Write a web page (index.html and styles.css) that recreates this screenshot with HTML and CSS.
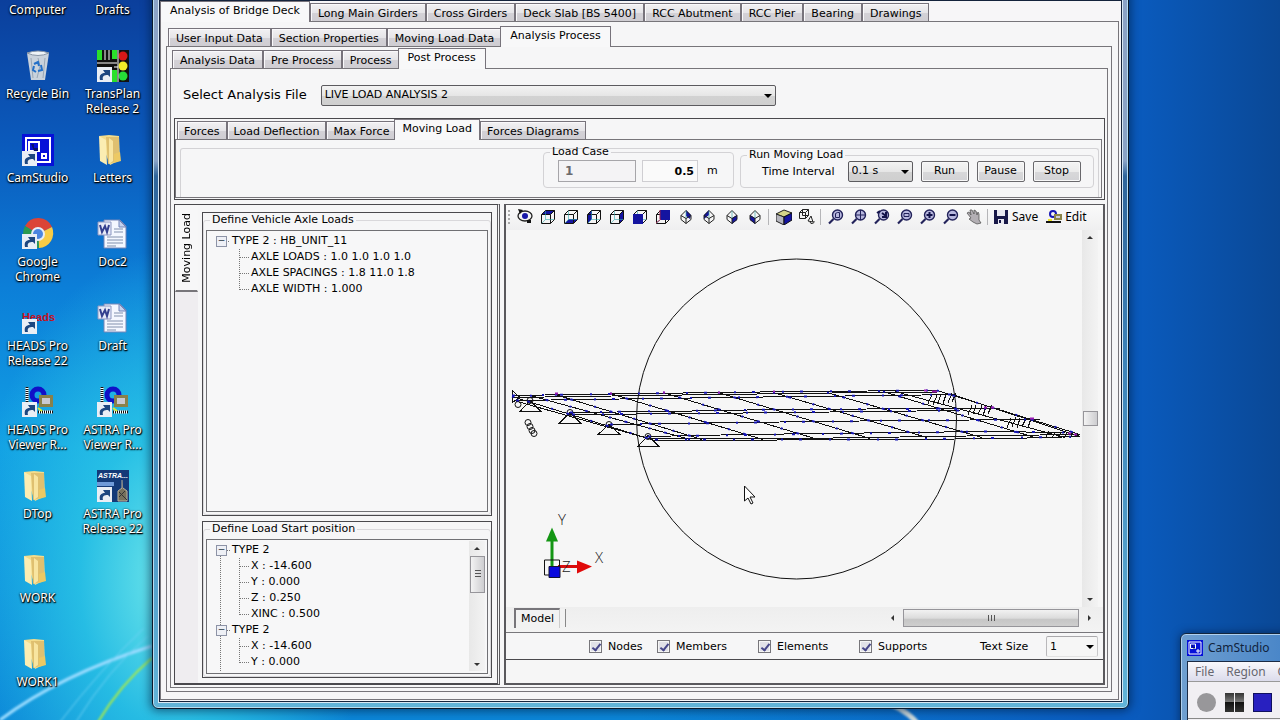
FILE: index.html
```html
<!DOCTYPE html>
<html lang="en">
<head>
<meta charset="utf-8">
<title>Analysis of Bridge Deck</title>
<link rel="stylesheet" href="styles.css">
</head>
<body>
<svg class="defs" aria-hidden="true">
  <symbol id="shortcut" viewBox="0 0 15 15"><path d="M0 0h15v15H0z" fill="#e9eef5"/><path d="M3 13C2 8 4 6 8 6L6 3l7 0 0 7-2-2C7 8 5 9 6 13z" fill="#1d4780"/></symbol>
  <symbol id="folder" viewBox="0 0 32 32"><path d="M2 2l10-1 10 1 1 24-10 5z" fill="#f3dc8b"/><path d="M9 3l13 0v24l-11 3z" fill="#dfc070"/><path d="M2 2l7 4 1 25-7-4z" fill="#fbedb2"/><path d="M12 4l4 3v20l-4 3z" fill="#f8e5a0"/><path d="M17 20l6-2 1 9-7 2z" fill="#ecc964"/></symbol>
  <symbol id="doc" viewBox="0 0 32 32"><path d="M7 2h16l6 6v22H7z" fill="#f4f7ff" stroke="#7586b8"/><path d="M22 2v7h7z" fill="#c6d3ee" stroke="#7586b8"/><path d="M17 11h9M17 14h9M10 19h16M10 22h16M10 25h16M10 28h9" stroke="#8190ad"/><path d="M1 4h13v13H1z" fill="#e6eaf7" stroke="#8c97c2"/><path d="M3 7l2 7 3-6 2 6 2-7" fill="none" stroke="#34408f" stroke-width="2"/></symbol>
  <symbol id="viewer" viewBox="0 0 32 32"><path d="M5 1v17M16 26h15" stroke="#fff" stroke-width="3"/><path d="M5 1v17M16 26h15" stroke="#111" stroke-width="3" stroke-dasharray="1 1"/><circle cx="16" cy="9" r="6" fill="none" stroke="#1010c8" stroke-width="5"/><path d="M17 9h14v12H17z" fill="#89804a"/><path d="M20 12h8v6h-8z" fill="#c9c9d2"/><path d="M16 22l4 3" stroke="#d6ee32" stroke-width="2"/></symbol>
  <symbol id="cam" viewBox="0 0 32 32"><path d="M0 0h32v32H0z" fill="#0610d8"/><path d="M4 4h24v24H4zM7 8h10v9H7zM20 20h4v4h-4z" fill="none" stroke="#fff" stroke-width="2"/><path d="M9 10h3v4h4v3h-4z" fill="#071070"/></symbol>
  <symbol id="frame" viewBox="0 0 16 16"><path d="M1.500 5.500h9v9h-9zM5.500 1.500h9v9l-4 4M1.500 5.500l4-4M10.500 5.500l4-4" fill="none" stroke="#111"/><path d="M5.500 2v8.500H14M2 14l3.500-3.500" stroke="#3aa" fill="none" stroke-width=".6"/></symbol>
  <symbol id="dia" viewBox="0 0 16 16"><path d="M8 1.500l5 5v4l-5 4-5-4v-4zM3 6.500l5 3 5-3M8 9.500v5" fill="none" stroke="#222"/><path d="M8 2v7" stroke="#4aa" stroke-width=".7"/></symbol>
  <symbol id="lens" viewBox="0 0 16 16"><circle cx="9.500" cy="6" r="5" fill="#b8b8df" stroke="#22225a" stroke-width="1.400"/><path d="M5.500 10L1 14.500" stroke="#22225a" stroke-width="2.200"/></symbol>
</svg>

<main class="desktop">
  <svg class="streaks" viewBox="0 0 1280 720" preserveAspectRatio="none" aria-hidden="true">
    <defs><filter id="soft"><feGaussianBlur stdDeviation="1"/></filter></defs>
    <g fill="none" filter="url(#soft)">
      <path d="M0 720Q60 675 152 646" stroke="#9adcff" stroke-width="3"/>
      <path d="M60 722Q100 670 144 628M76 722Q108 670 148 636" stroke="#6fd2f4"/>
      <path d="M98 722Q120 685 152 658" stroke="#a8ea4a" stroke-width="2"/>
      <path d="M880 700Q905 708 918 724" stroke="#cfdcdd" stroke-width="5"/>
    </g>
  </svg>

  <div class="icons">
    <div class="iconcol">
      <div class="item"><svg></svg><span>Computer</span></div>
      <div class="item"><svg viewBox="0 0 32 32"><path d="M5 3l22 0-4 27-14 0z" fill="#c9d2dc"/><path d="M5 3q11 5 22 0-11-4-22 0" fill="#eef3f7" stroke="#8794a5"/><path d="M9 8l2 20M23 8l-2 20M16 8l2 8-3 12" stroke="#9aa7b6" fill="none"/><path d="M12 14l4-2 1 4M19 15l1 5-4 1M14 22l-3-2 1-4" fill="none" stroke="#2470c8" stroke-width="2"/></svg><span>Recycle Bin</span></div>
      <div class="item"><svg viewBox="0 0 32 32"><use href="#cam" width="32" height="32"/><use href="#shortcut" y="17" width="15" height="15"/></svg><span>CamStudio</span></div>
      <div class="item"><svg viewBox="0 0 32 32"><path d="M16 16L3 8A15 15 0 0 1 30 9z" fill="#db4437"/><path d="M16 16L30 9A15 15 0 0 1 17 30z" fill="#f8cc46"/><path d="M16 16l1 14A15 15 0 0 1 3 8z" fill="#2c9a50"/><circle cx="16" cy="16" r="7" fill="#e7eef6"/><circle cx="16" cy="16" r="5" fill="#4c86e0"/><use href="#shortcut" y="16" width="15" height="15"/></svg><span>Google Chrome</span></div>
      <div class="item"><svg viewBox="0 0 32 32"><text x="0" y="19" class="heads">Heads</text><use href="#shortcut" y="17" width="15" height="15"/></svg><span>HEADS Pro Release 22</span></div>
      <div class="item"><svg viewBox="0 0 32 32"><use href="#viewer" width="32" height="32"/><use href="#shortcut" y="16" width="15" height="15"/></svg><span>HEADS Pro Viewer R...</span></div>
      <div class="item"><svg viewBox="0 0 32 32"><use href="#folder" width="32" height="32"/></svg><span>DTop</span></div>
      <div class="item"><svg viewBox="0 0 32 32"><use href="#folder" width="32" height="32"/></svg><span>WORK</span></div>
      <div class="item"><svg viewBox="0 0 32 32"><use href="#folder" width="32" height="32"/></svg><span>WORK1</span></div>
    </div>
    <div class="iconcol">
      <div class="item"><svg></svg><span>Drafts</span></div>
      <div class="item"><svg viewBox="0 0 32 32"><path d="M0 0h32v32H0z" fill="#111"/><path d="M0 0h5v10H0zM15 0h5v9h-5zM15 20h5v12h-5z" fill="#2be02b"/><path d="M8 0v10M12 0v10M0 13h20M17 17h4" stroke="#fff"/><circle cx="26" cy="6" r="4.500" fill="#d81818"/><circle cx="26" cy="16" r="4.500" fill="#f2ec28"/><circle cx="26" cy="26" r="4.500" fill="#26dd38"/><path d="M21 0v32" stroke="#fff"/><use href="#shortcut" y="17" width="15" height="15"/></svg><span>TransPlan Release 2</span></div>
      <div class="item"><svg viewBox="0 0 32 32"><use href="#folder" width="32" height="32"/></svg><span>Letters</span></div>
      <div class="item"><svg viewBox="0 0 32 32"><use href="#doc" width="32" height="32"/></svg><span>Doc2</span></div>
      <div class="item"><svg viewBox="0 0 32 32"><use href="#doc" width="32" height="32"/></svg><span>Draft</span></div>
      <div class="item"><svg viewBox="0 0 32 32"><use href="#viewer" width="32" height="32"/><use href="#shortcut" y="16" width="15" height="15"/></svg><span>ASTRA Pro Viewer R...</span></div>
      <div class="item"><svg viewBox="0 0 32 32"><path d="M0 0h32v32H0z" fill="#143a78"/><path d="M0 12h17v4H0z" fill="#6f9ad8"/><path d="M25 10v8l-4 3v10h9V21l-4-3" fill="#77705c" stroke="#b9b29c"/><path d="M22 22l8 8M22 27l6-6" stroke="#333"/><text x="1" y="8" class="astra">ASTRA...</text><use href="#shortcut" y="17" width="15" height="15"/></svg><span>ASTRA Pro Release 22</span></div>
    </div>
  </div>

  <section class="window" aria-label="Analysis of Bridge Deck">
    <div class="client">
      <div class="tabs" role="tablist">
        <button class="tab on" role="tab">Analysis of Bridge Deck</button><button class="tab" role="tab">Long Main Girders</button><button class="tab" role="tab">Cross Girders</button><button class="tab" role="tab">Deck Slab [BS 5400]</button><button class="tab" role="tab">RCC Abutment</button><button class="tab" role="tab">RCC Pier</button><button class="tab" role="tab">Bearing</button><button class="tab" role="tab">Drawings</button>
      </div>
      <div class="page page-main">
        <div class="tabs" role="tablist">
          <button class="tab" role="tab">User Input Data</button><button class="tab" role="tab">Section Properties</button><button class="tab" role="tab">Moving Load Data</button><button class="tab on" role="tab">Analysis Process</button>
        </div>
        <div class="page page-process">
          <div class="tabs" role="tablist">
            <button class="tab" role="tab">Analysis Data</button><button class="tab" role="tab">Pre Process</button><button class="tab" role="tab">Process</button><button class="tab on" role="tab">Post Process</button>
          </div>
          <div class="page page-post">
            <div class="filerow">
              <label for="file">Select Analysis File</label>
              <span class="drop wide"><select id="file"><option>LIVE LOAD ANALYSIS 2</option></select></span>
            </div>

            <div class="results">
              <div class="tabs" role="tablist">
                <button class="tab" role="tab">Forces</button><button class="tab" role="tab">Load Deflection</button><button class="tab" role="tab">Max Force</button><button class="tab on" role="tab">Moving Load</button><button class="tab" role="tab">Forces Diagrams</button>
              </div>
              <div class="page page-moving">
                <div class="runbar">
                  <fieldset class="group loadcase">
                    <legend>Load Case</legend>
                    <div class="controls">
                      <input class="num case" value="1" aria-label="Load case" disabled>
                      <input class="num step" id="step" value="0.5">
                      <label for="step">m</label>
                    </div>
                  </fieldset>
                  <fieldset class="group runner">
                    <legend>Run Moving Load</legend>
                    <div class="controls">
                      <label for="interval">Time Interval</label>
                      <span class="drop short"><select id="interval"><option>0.1 s</option></select></span>
                      <button class="push">Run</button><button class="push">Pause</button><button class="push">Stop</button>
                    </div>
                  </fieldset>
                </div>
              </div>
            </div>

            <div class="split">
              <div class="side">
                <div class="sidetabs"><button class="vtab"><span>Moving Load</span></button></div>
                <div class="sidepage">
                  <div class="box grow">
                    <fieldset class="treegroup">
                      <legend>Define Vehicle Axle Loads</legend>
                      <div class="treebox">
                        <ul class="tree">
                          <li>TYPE 2 : HB_UNIT_11
                            <ul><li>AXLE LOADS : 1.0 1.0 1.0 1.0</li><li>AXLE SPACINGS : 1.8 11.0 1.8</li><li>AXLE WIDTH : 1.000</li></ul>
                          </li>
                        </ul>
                      </div>
                    </fieldset>
                  </div>
                  <div class="box start">
                    <fieldset class="treegroup">
                      <legend>Define Load Start position</legend>
                      <div class="treebox">
                        <ul class="tree">
                          <li>TYPE 2
                            <ul><li>X : -14.600</li><li>Y : 0.000</li><li>Z : 0.250</li><li>XINC : 0.500</li></ul>
                          </li>
                          <li>TYPE 2
                            <ul><li>X : -14.600</li><li>Y : 0.000</li></ul>
                          </li>
                        </ul>
                        <div class="vscroll small"><i class="arrow up"></i><i class="thumb"></i><i class="arrow down"></i></div>
                      </div>
                    </fieldset>
                  </div>
                </div>
              </div>

              <div class="view">
                <div class="toolbar">
                  <i class="grip"></i>
                  <button class="tool" aria-label="Orbit"><svg viewBox="0 0 16 16"><ellipse cx="8" cy="7" rx="7" ry="5" fill="none" stroke="#222" stroke-width="1.300"/><circle cx="8" cy="7" r="3" fill="#1818a8"/><path d="M1 0l5 1-3 4zM10 11h4v3h-4z" fill="#111"/></svg></button>
                  <button class="tool" aria-label="Top view"><svg viewBox="0 0 16 16"><path d="M2 5l4-4h9l-4 4z" fill="#1414a0"/><use href="#frame"/></svg></button>
                  <button class="tool" aria-label="Bottom view"><svg viewBox="0 0 16 16"><path d="M2 14l4-4h9l-4 4z" fill="#1414a0"/><use href="#frame"/></svg></button>
                  <button class="tool" aria-label="Left view"><svg viewBox="0 0 16 16"><path d="M2 5l4-4v9l-4 4z" fill="#1414a0"/><use href="#frame"/></svg></button>
                  <button class="tool" aria-label="Right view"><svg viewBox="0 0 16 16"><path d="M10 6l4-4v9l-4 4z" fill="#1414a0"/><use href="#frame"/></svg></button>
                  <button class="tool" aria-label="Front view"><svg viewBox="0 0 16 16"><use href="#frame"/><path d="M1 5h10v10H1z" fill="#1414a0"/></svg></button>
                  <button class="tool" aria-label="Back view"><svg viewBox="0 0 16 16"><use href="#frame"/><path d="M5 1h10v10H5z" fill="#1414a0"/><path d="M1 14l5-4M5 1v9" stroke="#a02050"/></svg></button>
                  <button class="tool" aria-label="SW view"><svg viewBox="0 0 16 16"><path d="M8 1l5 5-1 4-4-3z" fill="#1414a0"/><use href="#dia"/></svg></button>
                  <button class="tool" aria-label="SE view"><svg viewBox="0 0 16 16"><path d="M8 1L3 6v4l5-4z" fill="#1414a0"/><use href="#dia"/></svg></button>
                  <button class="tool" aria-label="NE view"><svg viewBox="0 0 16 16"><path d="M8 9l5-3v5l-5 4z" fill="#1414a0"/><use href="#dia"/></svg></button>
                  <button class="tool" aria-label="NW view"><svg viewBox="0 0 16 16"><path d="M8 9L3 6v5l5 4z" fill="#1414a0"/><use href="#dia"/></svg></button>
                  <i class="sep"></i>
                  <button class="tool" aria-label="Shaded"><svg viewBox="0 0 16 16"><path d="M0 5l8-4 8 3-8 4z" fill="#d5d58a" stroke="#222"/><path d="M0 5l8 3v8l-8-4z" fill="#b5b5bd" stroke="#222"/><path d="M8 8l8-4v7l-8 5z" fill="#1414a0" stroke="#111"/></svg></button>
                  <button class="tool" aria-label="Wireframe"><svg viewBox="0 0 16 16"><path d="M.5 3.500h6v6h-6zM3.500.5h6v6h-6zM.5 3.500l3-3M6.500 3.500l3-3M6.500 9.500l3-3M12 7l-3 5 5 1zM11 13a2 2 0 1 0 4-1" fill="none" stroke="#222"/></svg></button>
                  <i class="sep"></i>
                  <button class="tool" aria-label="Zoom window"><svg viewBox="0 0 16 16"><use href="#lens"/><path d="M7.500 8.500v-4l2-1h2v5z" fill="none" stroke="#22225a"/></svg></button>
                  <button class="tool" aria-label="Zoom extents"><svg viewBox="0 0 16 16"><use href="#lens"/><path d="M9.500 1v10M4.500 6h10" stroke="#22225a"/></svg></button>
                  <button class="tool" aria-label="Zoom previous"><svg viewBox="0 0 16 16"><use href="#lens"/><path d="M8 4l4 3M12 3v5H8M3 4l3-2" stroke="#12124a" stroke-width="2" fill="none"/></svg></button>
                  <button class="tool" aria-label="Zoom object"><svg viewBox="0 0 16 16"><use href="#lens"/><path d="M7 4.500h5v3H7z" fill="none" stroke="#22225a"/></svg></button>
                  <button class="tool" aria-label="Zoom in"><svg viewBox="0 0 16 16"><use href="#lens"/><path d="M9.500 3v6M6.500 6h6" stroke="#12124a" stroke-width="2"/></svg></button>
                  <button class="tool" aria-label="Zoom out"><svg viewBox="0 0 16 16"><use href="#lens"/><path d="M6.500 6h6" stroke="#12124a" stroke-width="2"/></svg></button>
                  <button class="tool" aria-label="Pan"><svg viewBox="0 0 16 16"><path d="M1 4l2-1 2 3-1-5 2 0 2 4 0-4 2 1 1 4 1-3 1 2 0 6 2 3-4 1-4-2-4-3 2-1z" fill="#b3afb4" stroke="#555" stroke-width=".8"/></svg></button>
                  <i class="sep"></i>
                  <button class="tool text"><svg viewBox="0 0 16 16"><path d="M1 1h14v14H1z" fill="#181848"/><path d="M4 1h8v6H4zM5 10h6v5H5z" fill="#e8e8f0"/><path d="M6 11h2v3H6z" fill="#181848"/></svg>Save</button>
                  <button class="tool text edit"><svg viewBox="0 0 16 16"><path d="M0 13h15" stroke="#111" stroke-width="2"/><path d="M2 11h4" stroke="#eee32c" stroke-width="2"/><circle cx="7" cy="5" r="3" fill="none" stroke="#1515b5" stroke-width="2"/><path d="M8 5h8v6H8z" fill="#8b8449"/><path d="M10 7h4v2h-4z" fill="#ccd"/></svg>Edit</button>
                </div>
                <div class="stage">
                  <svg class="model" viewBox="506 230 576 376" role="img" aria-label="Bridge deck model">
                    <g fill="none" stroke="#111" shape-rendering="crispEdges">
                      <circle cx="796.500" cy="418.500" r="160" shape-rendering="auto"/>
                      <path d="M512 395L645 393 800 391 937 390M512 397L645 395 870 392 937 392M516 400L655 398 800 396 890 395 955 394"/>
                      <path d="M570 412L665 411 775 409 960 408 1000 408M572 414L700 413 960 410M610 424L740 422 900 420 1040 419"/>
                      <path d="M648 436L745 434 985 431 1065 432M648 438L800 438 1000 435 1080 434M655 440L900 439 1010 438 1080 436"/>
                      <path d="M512 396L655 440M514 400L648 438M530 395L690 439M555 394L702 439M610 393L763 439M663 392L818 439M718 392L870 438"/>
                      <path d="M773 392L927 437M827 392L982 437M883 391L1035 437M895 391L1065 437M937 390L1080 434M952 394L1080 436"/>
                      <path d="M512 390v12l8-5zM530 400l-10 11h21zM570 412l-11 11h22zM609 424l-11 10h22zM648 435l-10 11h21z"/>
                      <path d="M928 403l4-9M933 404l4-9M938 402l3-8M943 403l3-9M948 402l4-9M952 401l4-8M968 414l4-9M973 413l3-8M978 414l4-9M983 415l3-9M988 413l4-8M1007 427l4-9M1012 426l4-9M1017 427l3-9M1022 426l4-8M1028 427l3-9M1046 436l3-5M1052 437l3-5M1058 437l3-5M1064 437l3-5M1070 437l3-5"/>
                      <g shape-rendering="auto"><circle cx="518" cy="404" r="3"/><circle cx="528" cy="422" r="3"/><circle cx="530" cy="426" r="3"/><circle cx="532" cy="430" r="3"/><circle cx="534" cy="433" r="3"/><circle cx="530" cy="400" r="3"/><circle cx="570" cy="412" r="3"/><circle cx="609" cy="424" r="3"/><circle cx="648" cy="436" r="3"/></g>
                    </g>
                    <g class="nodes">
                      <path d="M512 395L645 393 800 391 937 390M516 400L655 398 955 394M570 412L775 409 1000 408M572 414L960 410M610 424L900 420 1040 419M648 436L985 431 1065 432M655 439L900 439 1080 436"/>
                      <path class="fine" d="M512 396L655 440M530 395L690 439M555 394L702 439M610 393L763 439M663 392L818 439M718 392L870 438M773 392L927 437M827 392L982 437M883 391L1035 437M937 390L1080 434"/>
                      <path class="hot" d="M555 393h3M610 393h2M663 392h2M718 392h2M773 391h2M924 390h3M932 391h5M984 407h3M991 407h3M1030 418h4M1068 433h3M1074 434h3"/>
                    </g>
                    <path d="M552 566v-26" stroke="#149614" stroke-width="3"/><path d="M552 527l6 14h-12z" fill="#149614"/>
                    <path d="M558 566h20" stroke="#d90b0b" stroke-width="3"/><path d="M592 566l-15 7v-13z" fill="#e00a0a"/>
                    <path d="M544.500 559.500h15v15h-15z" fill="none" stroke="#111"/><path d="M549 566h11v11h-11z" fill="#0808dd" stroke="#113"/>
                    <text x="558" y="524" class="axis">Y</text><text x="595" y="562" class="axis">X</text><text x="562" y="571" class="axis">Z</text>
                    <path d="M744.500 485.500v15l3.500-3 3 6 2-1-3-6h5z" fill="#fff" stroke="#111"/>
                  </svg>
                  <div class="vscroll"><i class="arrow up"></i><i class="thumb"></i><i class="arrow down"></i></div>
                </div>
                <div class="strip">
                  <button class="modeltab">Model</button>
                  <div class="hscroll"><i class="arrow left"></i><i class="thumb"></i><i class="arrow right"></i></div>
                </div>
                <div class="options">
                  <label class="nodesopt"><input type="checkbox" checked>Nodes</label>
                  <label><input type="checkbox" checked>Members</label>
                  <label><input type="checkbox" checked>Elements</label>
                  <label class="last"><input type="checkbox" checked>Supports</label>
                  <label for="size" class="sizelabel">Text Size</label>
                  <span class="drop size"><select id="size"><option>1</option></select></span>
                </div>
                <div class="status"></div>
              </div>
            </div>
          </div>
        </div>
      </div>
    </div>
  </section>

  <section class="recorder" aria-label="CamStudio">
    <header><svg viewBox="0 0 32 32"><use href="#cam"/></svg>CamStudio</header>
    <div class="recbody">
      <nav><button>File</button><button>Region</button><button>Options</button></nav>
      <div class="recbuttons">
        <button class="rec" aria-label="Record"></button><button class="pause" aria-label="Pause"><i></i><i></i></button><button class="stop" aria-label="Stop"></button>
      </div>
    </div>
  </section>
</main>
</body>
</html>
```
FILE: styles.css
```css
* { box-sizing: border-box; }
body { margin: 0; font: 11px/14px "DejaVu Sans", sans-serif; color: #000; }
button, input, select { font: inherit; color: inherit; margin: 0; border-radius: 0; }
button { padding: 0; border: 0; background: none; }
i { display: block; font-style: normal; }
.defs { position: absolute; width: 0; height: 0; }

.desktop {
  position: relative; height: 100vh; min-height: 480px; overflow: hidden;
  background:
    radial-gradient(ellipse 200px 330px at 170px 580px, #6ee6ea 0%, #2cc8e6cc 45%, #16a8e000 100%),
    linear-gradient(90deg, transparent 88%, #0a4896 100%),
    linear-gradient(90deg, transparent 50%, #0a5cc0 86%),
    linear-gradient(180deg, #0b3f9c 0%, #0b5abc 20%, #0c7fd8 40%, #119fe4 62%, #0b86d8 100%);
}
.streaks { position: absolute; inset: 0; width: 100%; height: 100%; }

/* desktop icons */
.icons { position: relative; display: flex; margin-top: -34px; width: 150px; }
.iconcol { width: 75px; }
.item {
  height: 84px; display: flex; flex-direction: column; align-items: center;
  font: 12px/15px "Noto Sans", sans-serif; color: #fff; text-align: center;
  text-shadow: 1px 1px 1px #000, 0 1px 2px #000, 0 0 2px #000a;
}
.item svg { width: 32px; height: 32px; flex: none; margin: 0 0 4px; overflow: visible; }
.item span { width: 72px; }
.heads { font: bold 11px "Liberation Sans", sans-serif; fill: #c80f1c; text-shadow: none; }
.astra { font: italic bold 7px "Liberation Sans", sans-serif; fill: #fff; text-shadow: none; }

/* main window */
.window {
  position: absolute; left: 152px; right: 151px; top: -40px; bottom: 11px;
  padding: 39px 6px 6px; border: 1px solid #0b1a2c; border-radius: 6px;
  background:
    linear-gradient(180deg, #8ba3c6 0, #8aa3c6 200px, #2f659b 215px, #3c82b8 400px, #62b4d8 100%);
  box-shadow: inset 0 0 0 1px #b8dcf0, 0 0 10px 2px #001c4099;
}
.client {
  height: 100%; border: 1px solid #14233c; display: flex; flex-direction: column;
  background: #f7f6f8; box-shadow: 0 0 0 1px #d8e8f4;
}
.tabs { display: flex; align-items: flex-end; height: 20px; padding-left: 2px; flex: none; }
.tab {
  height: 18px; padding: 2px 7px 0; border: 1px solid #77737b; border-bottom: 0;
  background: linear-gradient(#f2f1f3 0, #e6e5e8 50%, #d3d1d6 55%, #cfcdd2 100%);
  line-height: 14px; white-space: nowrap; box-shadow: inset 1px 1px #faf9fb;
}
.tab.on {
  height: 21px; margin: 0 0 -1px -2px; padding: 0 9px 2px; position: relative; z-index: 1;
  background: #f8f8f9; box-shadow: none;
}
.page { flex: 1; min-height: 0; border: 1px solid #77757a; background: #f6f6f7; display: flex; flex-direction: column; }
.page-main { margin: 0 2px 1px 0; padding: 4px 6px 7px 5px; }
.page-process { padding: 1px 3px 3px; }
.page-post { padding: 0 2px 2px 3px; }

.filerow { display: flex; align-items: center; gap: 14px; height: 49px; padding: 3px 0 0 9px; flex: none; font-size: 13px; }
.drop { position: relative; display: inline-flex; font-size: 11px; }
.drop select {
  appearance: none; width: 100%; height: 21px; padding: 0 16px 0 3px; border: 1px solid #5c5b5f; border-radius: 2px;
  background: linear-gradient(#f3f3f3 0, #e6e6e6 50%, #d2d2d2 55%, #cfcfcf 100%);
}
.drop::after {
  content: ""; position: absolute; right: 4px; top: 9px; border: 4px solid transparent; border-top-color: #000; border-bottom: 0;
}
.drop.wide { width: 455px; }
.drop.short { width: 65px; }
.drop.size { width: 52px; }
.drop.size select { background: #f6f6f6; border-color: #a9a8ab #c8c8ca #e2e2e2 #b9b8bb; }

.results { flex: none; height: 82px; border: 1px solid #4a494d; display: flex; flex-direction: column; }
.results .tab { padding: 2px 6px 0; }
.results .tab.on { padding: 0 7px 2px; }
.page-moving { margin: 0 2px 1px 0; padding: 8px 2px 0 4px; }
.runbar {
  flex: 1; min-height: 0; display: flex; justify-content: flex-end; align-items: flex-end; gap: 6px; padding: 0 4px 9px 0;
  border: 1px solid #d3d2d5; border-bottom: 0; border-radius: 3px 3px 0 0;
}
.group { margin: 0; min-width: 0; border: 1px solid #d3d2d5; border-radius: 4px; }
.group legend { padding: 0 2px; line-height: 14px; }
.group .controls { display: flex; align-items: center; height: 22px; }
.loadcase { width: 191px; padding: 1px 14px 5px; }
.loadcase legend { margin-left: -8px; }
.runner { width: 354px; padding: 0 12px 5px 21px; }
.runner legend { margin-left: -15px; }
.runner .controls { margin-top: -2px; gap: 8px; }
.runner label { margin-right: 5px; margin-top: 2px; }
.num { width: 78px; height: 22px; padding: 0 6px; border: 1px solid #a6a5a9; background: #f4f3f5; font-size: 12px; }
.num.case { color: #6b6a6d; font-weight: bold; }
.num.step { width: 56px; margin: 0 9px 0 6px; padding: 0 3px; border-color: #cfced2; text-align: right; font-weight: bold; font-size: 11px; background: #fafafa; }
.push {
  width: 48px; height: 21px; border: 1px solid #69686c; border-radius: 2px;
  background: linear-gradient(#f4f4f4 0, #ebebeb 50%, #d8d8da 55%, #d2d2d5 100%); box-shadow: inset 0 0 0 1px #f8f8f8;
}

.split { flex: 1; min-height: 0; display: flex; gap: 4px; margin-top: 4px; }
.side { flex: none; width: 326px; display: flex; border: 1px solid #4a494d; border-right: 3px double #5b5a5e; border-bottom-width: 2px; }
.sidetabs { width: 23px; background: #efedf0; }
.vtab { width: 23px; height: 87px; border: 1px solid #f7f7f7; border-bottom: 2px solid #77757a; background: #f7f7f8; display: flex; align-items: center; justify-content: center; }
.vtab span { writing-mode: vertical-rl; transform: rotate(180deg); white-space: nowrap; }
.sidepage { flex: 1; display: flex; flex-direction: column; gap: 5px; padding: 7px 5px 5px 4px; min-height: 0; }
.box { border: 1px solid #4a494d; display: flex; min-height: 0; }
.box.grow { flex: 1; }
.box.start { flex: none; height: 157px; }
.treegroup { flex: 1; min-width: 0; min-height: 0; margin: 0; padding: 3px 2px 2px; border: 1px solid #d9d8db; border-radius: 3px; display: flex; flex-direction: column; }
.treegroup legend { margin-left: 4px; padding: 0 2px; line-height: 14px; }
.treebox { flex: 1; min-height: 0; border: 1px solid #707074; background: #f7f7f8; display: flex; padding: 1px 2px 2px 2px; overflow: hidden; }
.tree { flex: 1; margin: 0; padding: 1px 0 0 23px; list-style: none; line-height: 16px; overflow: hidden; }
.tree li { position: relative; white-space: nowrap; }
.tree > li::before { content: "−"; position: absolute; left: -16px; top: 3px; width: 9px; height: 9px; border: 1px solid #8d93a6; background: #eef0f6; font-size: 9px; line-height: 7px; text-align: center; color: #234; z-index: 1; }
.tree > li::after { content: ""; position: absolute; left: -12px; top: 8px; width: 9px; height: 100%; border-top: 1px dotted #777; }
.tree > li:not(:only-child)::after { border-left: 1px dotted #777; }
.tree ul { margin: 0; padding: 0 0 0 19px; list-style: none; }
.tree ul li::before { content: ""; position: absolute; left: -12px; top: -8px; width: 9px; height: 16px; border: dotted #777; border-width: 0 0 1px 1px; }
.tree ul li:first-child::before { top: 0; height: 8px; }

.vscroll { flex: none; width: 16px; display: flex; flex-direction: column; justify-content: space-between; align-items: center; background: linear-gradient(90deg, #e8e8e8, #f3f3f3); padding: 6px 0; }
.thumb { border: 1px solid #96959a; background: linear-gradient(90deg, #f3f3f3, #cdcdd0); width: 15px; height: 15px; }
.vscroll.small { padding: 6px 0 5px; justify-content: flex-start; gap: 6px; }
.small .thumb { height: 37px; background: linear-gradient(#555 1px, transparent 1px) 4px 13px / 6px 3px no-repeat, linear-gradient(#555 1px, transparent 1px) 4px 16px / 6px 3px no-repeat, linear-gradient(#555 1px, transparent 1px) 4px 19px / 6px 3px no-repeat, linear-gradient(90deg, #f3f3f3, #cdcdd0); }
.small .down { margin-top: auto; }
.arrow { border: 3px solid transparent; width: 6px; height: 3px; flex: none; }
.arrow.up { border-top: 0; border-bottom: 3px solid #333; height: 0; }
.arrow.down { border-bottom: 0; border-top: 3px solid #333; height: 0; }
.arrow.left { border-left: 0; border-right-color: #333; width: 0; height: 6px; }
.arrow.right { border-right: 0; border-left-color: #333; width: 0; height: 6px; }

.view { flex: 1; min-width: 0; display: flex; flex-direction: column; border: 2px solid #5a595d; border-top-width: 1px; }
.toolbar { flex: none; height: 25px; display: flex; align-items: center; padding: 0 0 2px 2px; background: linear-gradient(#fafafa, #efeff0); font: 12px/16px "Noto Sans", sans-serif; overflow: hidden; }
.grip { width: 2px; height: 14px; margin-right: 3px; background: repeating-linear-gradient(#aaa 0 2px, transparent 2px 4px); }
.tool { width: 23px; height: 22px; flex: none; display: flex; align-items: center; justify-content: center; }
.tool svg { width: 16px; height: 16px; flex: none; }
.tool.text { width: auto; gap: 3px; margin-left: 2px; }
.tool.edit { margin-left: 8px; }
.sep { width: 1px; height: 16px; margin: 0 3px 0 2px; background: #b5b5b8; }
.stage { flex: 1; min-height: 0; display: flex; padding-right: 5px; background: #f6f6f6; }
.model { flex: 1; min-width: 0; height: 100%; }
.nodes { fill: none; stroke: #1616b4; stroke-width: 2; stroke-dasharray: 3 27 2 16; }
.nodes .fine { stroke-dasharray: 2 14 3 22; }
.nodes .hot { stroke: #9a1bb0; stroke-dasharray: none; }
.axis { font: 300 15px "Open Sans", sans-serif; fill: #222; }
.strip { flex: none; height: 26px; display: flex; align-items: center; justify-content: space-between; padding: 0 12px 4px 8px; background: linear-gradient(#eee, #f3f3f3); border-bottom: 1px solid #78777b; }
.modeltab { width: 46px; height: 20px; border: solid #77757a; border-width: 2px 1px 0 2px; border-right-color: #ccc; background: #f2f2f2; box-shadow: 6px 0 0 -1px #f2f2f2, 7px 0 0 -1px #888; }
.hscroll { display: flex; align-items: center; gap: 9px; width: 200px; height: 18px; }
.hscroll .thumb { flex: 1; width: auto; height: 18px; background: linear-gradient(90deg, #555 1px, transparent 1px 3px, #555 3px 4px, transparent 4px 6px, #555 6px 7px, transparent 7px) center / 7px 6px no-repeat, linear-gradient(#f2f2f2 0, #dcdcdc 50%, #c6c6c6 60%, #cecece 100%); }
.options { flex: none; height: 27px; display: flex; align-items: center; justify-content: flex-end; padding: 1px 5px 0 0; border-bottom: 1px solid #4a494d; }
.options label { display: flex; align-items: center; gap: 6px; width: 101px; }
.options .nodesopt { width: 68px; }
.options .last { width: 121px; }
.options .sizelabel { width: 66px; }
.options input { appearance: none; position: relative; width: 13px; height: 13px; border: 1px solid #77767b; background: #e1e1e8; box-shadow: inset 0 0 0 1px #f5f5f5; }
.options input::after { content: ""; position: absolute; left: 4px; top: 1px; width: 3px; height: 7px; border: solid #46468a; border-width: 0 2px 2px 0; transform: rotate(38deg); }
.status { flex: none; height: 23px; background: #f6f6f6; }

/* recorder window */
.recorder {
  position: absolute; left: calc(100% - 100px); top: calc(100% - 87px); width: 250px; height: 130px; padding: 0 6px;
  border: 1px solid #12263e; border-radius: 6px; background: linear-gradient(90deg, #6f9fd0, #3f7fc6 130px);
  box-shadow: inset 0 0 0 1px #b0d0ee, 0 0 8px #00183899; font: 12px/16px "Noto Sans", sans-serif;
}
.recorder header { display: flex; align-items: center; gap: 5px; height: 27px; color: #10233c; }
.recorder header svg { width: 16px; height: 16px; }
.recbody { height: 100px; background: #f1eff3; border: 1px solid #1a2a44; }
.recbody nav { display: flex; gap: 12px; height: 20px; padding: 0 7px; background: linear-gradient(#f8f8fc 0, #dcdcec); border-bottom: 1px solid #999; color: #66666f; }
.recbody nav button { flex: none; }
.recbuttons { display: flex; align-items: center; gap: 9px; padding: 11px 0 6px 9px; border-bottom: 1px solid #888; }
.rec { width: 19px; height: 19px; border-radius: 50%; background: #98979a; }
.pause { display: flex; gap: 1px; }
.pause i { width: 9px; height: 19px; background: linear-gradient(#333, #777 45%, #111 50%, #333); }
.stop { width: 19px; height: 19px; background: #2820c0; border: 1px solid #101060; }
```
